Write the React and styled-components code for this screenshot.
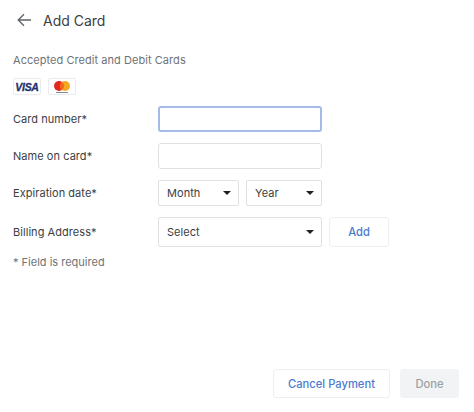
import React from 'react';
import styled, { createGlobalStyle } from 'styled-components';

const Global = createGlobalStyle`
  html, body { margin: 0; padding: 0; background: #fff; }
  body { font-family: Inter, "Liberation Sans", sans-serif; }
`;
const Page = styled.div`
  width: 474px; height: 412px; box-sizing: border-box; display: flex; flex-direction: column;
  padding: 0 15px 14px 13px; overflow: hidden; color: #3c4043;
`;
const Header = styled.header`
  height: 40px; display: flex; align-items: center; gap: 12px; padding-left: 4px; flex: none;
`;
const Title = styled.h1`
  margin: 0; font-size: 14px; font-weight: 400; color: #3c4043;
`;
const Accepted = styled.p`
  margin: 12px 0 0; height: 16px; line-height: 16px; font-size: 11px; color: #6f7377; letter-spacing: 0.05px;
`;
const Cards = styled.div`
  display: flex; gap: 7px; margin-top: 10px; height: 17px;
`;
const CardBadge = styled.div`
  width: 28px; height: 17px; box-sizing: border-box; border: 1px solid #e8eaed; border-radius: 2px;
  display: flex; align-items: center; justify-content: center; background: #fff;
`;
const VisaMark = styled.span`
  font: italic 700 10.5px "Liberation Sans", sans-serif; color: #1f3170; letter-spacing: -0.3px; -webkit-text-stroke: 0.3px #1f3170;
`;
const Form = styled.div`
  display: flex; flex-direction: column; gap: 11px; margin-top: 11px;
`;
const Row = styled.div`
  display: grid; grid-template-columns: 145px 1fr; align-items: center;
`;
const Label = styled.label`
  font-size: 11px; color: #3c4043; letter-spacing: 0.05px;
`;
const Controls = styled.div`
  display: flex; gap: 7px;
`;
const Input = styled.div`
  width: 164px; height: 26px; box-sizing: border-box; border-radius: 3px; background: #fff;
  border: ${p => (p.$focused ? '2px solid #a3bbe6' : '1px solid #dfe1e5')};
`;
const SelectBox = styled.div`
  width: ${p => p.$width}px; height: ${p => p.$height || 26}px; box-sizing: border-box;
  border: 1px solid #dfe1e5; border-radius: 2px; display: flex; align-items: center;
  justify-content: space-between; padding: 0 7px 0 8px; font-size: 11px; color: #3c4043; letter-spacing: 0.05px;
`;
const Caret = styled.span`
  width: 0; height: 0; border-left: 4px solid transparent; border-right: 4px solid transparent;
  border-top: 4px solid #202124;
`;
const Button = styled.button`
  height: ${p => p.$height}px; width: ${p => p.$width}px; box-sizing: border-box; padding: 0; border-radius: 3px;
  font-family: inherit; font-size: 11.2px; font-weight: 500;
  border: 1px solid ${p => (p.$disabled ? '#f1f3f4' : '#eeeff1')};
  background: ${p => (p.$disabled ? '#f1f3f4' : '#fff')};
  color: ${p => (p.$disabled ? '#9aa0a6' : '#4a7bd0')};
`;
const Note = styled.p`
  margin: 8px 0 0; height: 14px; line-height: 14px; font-size: 11px; color: #6f7377;
`;
const Footer = styled.footer`
  margin-top: auto; display: flex; justify-content: flex-end; gap: 10px;
`;

const Select = ({ children, width, height }) => (
  <SelectBox $width={width} $height={height}>
    {children}
    <Caret />
  </SelectBox>
);

export default function App() {
  return (
    <>
      <Global />
      <Page>
        <Header>
          <svg width="14" height="14" viewBox="0 0 14 14" fill="none" stroke="#5f6368" strokeWidth="1.3">
            <path d="M14 7H1.2M7 1.2 1.2 7 7 12.8" />
          </svg>
          <Title>Add Card</Title>
        </Header>
        <Accepted>Accepted Credit and Debit Cards</Accepted>
        <Cards>
          <CardBadge><VisaMark>VISA</VisaMark></CardBadge>
          <CardBadge>
            <svg width="20" height="14" viewBox="0 0 20 14">
              <circle cx="7" cy="6" r="5" fill="#e2281f" />
              <circle cx="13" cy="6" r="5" fill="#f5a623" />
              <path d="M10 2a5 5 0 0 1 0 8 5 5 0 0 1 0-8z" fill="#f0641e" />
              <rect x="4" y="12" width="12" height="1" fill="#8a8a8a" />
            </svg>
          </CardBadge>
        </Cards>
        <Form>
          <Row>
            <Label>Card number*</Label>
            <Input $focused />
          </Row>
          <Row>
            <Label>Name on card*</Label>
            <Input />
          </Row>
          <Row>
            <Label>Expiration date*</Label>
            <Controls>
              <Select width={81}>Month</Select>
              <Select width={76}>Year</Select>
            </Controls>
          </Row>
          <Row>
            <Label>Billing Address*</Label>
            <Controls>
              <Select width={164} height={30}>Select</Select>
              <Button $width={60} $height={30}>Add</Button>
            </Controls>
          </Row>
        </Form>
        <Note>* Field is required</Note>
        <Footer>
          <Button $width={117} $height={29}>Cancel Payment</Button>
          <Button $width={59} $height={29} $disabled>Done</Button>
        </Footer>
      </Page>
    </>
  );
}
